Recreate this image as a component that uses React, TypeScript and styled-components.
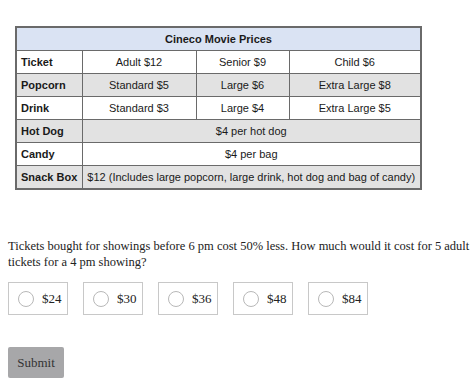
import React from "react";
import styled, { createGlobalStyle } from "styled-components";

const GlobalStyle = createGlobalStyle`
  html, body {
    margin: 0;
    padding: 0;
    background: #ffffff;
  }
  body {
    font-family: "Liberation Serif", "Times New Roman", serif;
    color: #222;
  }
`;

interface PriceRow {
  label: string;
  cells: string[];
  shaded?: boolean;
}

const rows: PriceRow[] = [
  { label: "Ticket", cells: ["Adult $12", "Senior $9", "Child $6"] },
  { label: "Popcorn", cells: ["Standard $5", "Large $6", "Extra Large $8"], shaded: true },
  { label: "Drink", cells: ["Standard $3", "Large $4", "Extra Large $5"] },
  { label: "Hot Dog", cells: ["$4 per hot dog"], shaded: true },
  { label: "Candy", cells: ["$4 per bag"] },
  {
    label: "Snack Box",
    cells: ["$12 (Includes large popcorn, large drink, hot dog and bag of candy)"],
    shaded: true,
  },
];

const choices = ["$24", "$30", "$36", "$48", "$84"];

const App: React.FC = () => {
  return (
    <>
      <GlobalStyle />
      <Page>
        <PriceTable>
          <colgroup>
            <col style={{ width: 66 }} />
            <col style={{ width: 114 }} />
            <col style={{ width: 93 }} />
            <col />
          </colgroup>
          <thead>
            <tr>
              <TitleCell colSpan={4}>Cineco Movie Prices</TitleCell>
            </tr>
          </thead>
          <tbody>
            {rows.map((row) => (
              <Row key={row.label} $shaded={row.shaded}>
                <LabelCell>{row.label}</LabelCell>
                {row.cells.map((cell) => (
                  <Cell key={cell} colSpan={row.cells.length === 1 ? 3 : 1}>
                    {cell}
                  </Cell>
                ))}
              </Row>
            ))}
          </tbody>
        </PriceTable>

        <Question>
          Tickets bought for showings before 6 pm cost 50% less. How much would it cost for 5
          adult tickets for a 4 pm showing?
        </Question>

        <Choices>
          {choices.map((c) => (
            <Choice key={c}>
              <Radio />
              <span>{c}</span>
            </Choice>
          ))}
        </Choices>

        <SubmitButton>Submit</SubmitButton>
      </Page>
    </>
  );
};

const Page = styled.div`
  padding: 26px 2px 0 8px;
`;

const PriceTable = styled.table`
  margin-left: 7px;
  width: 407px;
  border-collapse: collapse;
  table-layout: fixed;
  border: 2px solid #6a6a6a;
  font-family: "Liberation Sans", Arial, sans-serif;
  font-size: 11px;
  color: #1a1a1a;
`;

const TitleCell = styled.th`
  height: 22px;
  padding: 0;
  background: #dae3f3;
  border: 1px solid #6a6a6a;
  font-weight: bold;
  text-align: center;
`;

const Row = styled.tr<{ $shaded?: boolean }>`
  background: ${(p) => (p.$shaded ? "#e2e2e2" : "#ffffff")};
`;

const LabelCell = styled.td`
  height: 22px;
  padding: 0 4px;
  border: 1px solid #6a6a6a;
  font-weight: bold;
  white-space: nowrap;
`;

const Cell = styled.td`
  height: 22px;
  padding: 0 3px;
  border: 1px solid #6a6a6a;
  text-align: center;
  white-space: nowrap;
`;

const Question = styled.p`
  margin: 48px 0 0 0;
  font-size: 12.5px;
  line-height: 16px;
  color: #222;
`;

const Choices = styled.div`
  display: flex;
  gap: 15px;
  margin-top: 12px;
`;

const Choice = styled.label`
  box-sizing: border-box;
  width: 60px;
  height: 33px;
  display: flex;
  align-items: center;
  gap: 8px;
  padding-left: 9px;
  border: 1px solid #c8c8c8;
  font-size: 13px;
  color: #222;
`;

const Radio = styled.span`
  box-sizing: border-box;
  width: 16px;
  height: 16px;
  border-radius: 50%;
  border: 1px solid #b8b8b8;
  background: #fff;
`;

const SubmitButton = styled.button`
  display: block;
  margin-top: 32px;
  width: 56px;
  height: 31px;
  padding: 0;
  border: none;
  border-radius: 2px;
  background: #a7a7a9;
  font-family: "Liberation Serif", "Times New Roman", serif;
  font-size: 13px;
  color: #333;
`;

export default App;
